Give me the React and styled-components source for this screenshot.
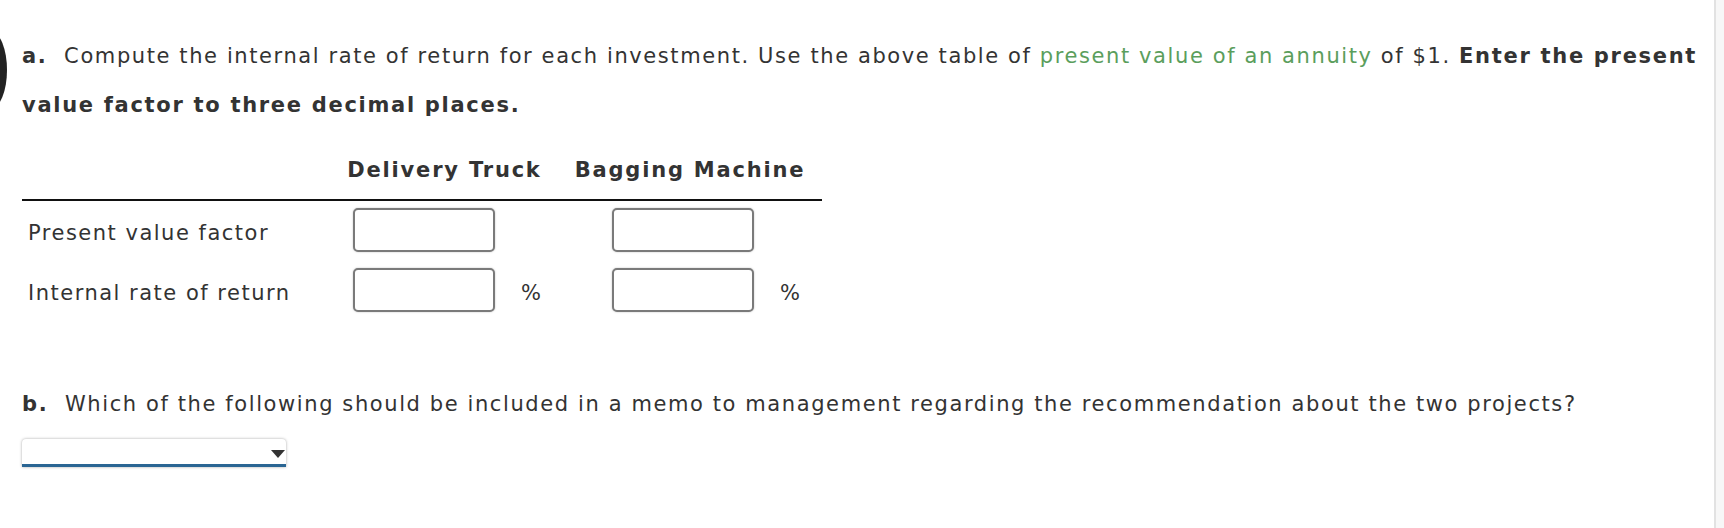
import styled, { createGlobalStyle } from 'styled-components';

const GlobalStyle = createGlobalStyle`
  html, body {
    margin: 0;
    padding: 0;
    background: #f7f7f7;
  }
  body {
    font-family: "DejaVu Sans", Verdana, sans-serif;
    color: #333;
  }
`;

const Page = styled.div`
  position: relative;
  width: 1716px;
  min-height: 528px;
  background: #fff;
  border-right: 2px solid #e2e2e2;
  padding: 32px 0 0 22px;
  box-sizing: border-box;
  overflow: hidden;
`;

const Marker = styled.div`
  position: absolute;
  left: -24px;
  top: 32px;
  width: 31px;
  height: 76px;
  border-radius: 50%;
  background: #222;
`;

const Question = styled.p`
  margin: 0;
  font-size: 21px;
  letter-spacing: 1.6px;
  line-height: 49px;
  width: 1690px;

  & b {
    font-weight: bold;
    letter-spacing: 1.7px;
  }
`;

const Link = styled.span`
  color: #5b9e5c;
`;

const Table = styled.div`
  margin-top: 23px;
  width: 800px;
  display: grid;
  grid-template-columns: 309px 227px 264px;
`;

const HeadCell = styled.div`
  height: 48px;
  border-bottom: 2px solid #111;
  font-size: 21px;
  font-weight: bold;
  letter-spacing: 1.8px;
  line-height: 24px;
  padding-top: 5px;
  box-sizing: border-box;
  text-align: center;
  white-space: nowrap;
`;

const Label = styled.div`
  height: 60px;
  padding: 10px 0 0 6px;
  box-sizing: border-box;
  display: flex;
  align-items: flex-start;
  font-size: 21px;
  letter-spacing: 1.5px;

  & > span {
    display: block;
    line-height: 44px;
  }
`;

const Cell = styled.div`
  height: 60px;
  padding: 7px 0 0 ${(p) => p.$pad}px;
  box-sizing: border-box;
  display: flex;
  align-items: flex-start;
  gap: 26px;
`;

const Box = styled.div`
  width: 142px;
  height: 44px;
  border: 2px solid #7a7a7a;
  border-radius: 5px;
  box-sizing: border-box;
  box-shadow: 0 0 2px rgba(0, 0, 0, 0.25);
  background: #fff;
`;

const Pct = styled.span`
  font-size: 21px;
  line-height: 44px;
  padding-top: 3px;
`;

const PartB = styled(Question)`
  margin-top: 59px;
`;

const Select = styled.div`
  margin-top: 10px;
  width: 264px;
  height: 25px;
  background: #fff;
  border-radius: 4px 4px 0 0;
  box-shadow: 0 0 3px rgba(0, 0, 0, 0.35);
  border-bottom: 3px solid #2a6593;
  display: flex;
  justify-content: flex-end;
  align-items: center;
  box-sizing: content-box;
`;

const Caret = styled.span`
  width: 0;
  height: 0;
  border-left: 7px solid transparent;
  border-right: 7px solid transparent;
  border-top: 8px solid #333;
  margin-right: 1px;
  margin-top: 4px;
`;

const rows = ['Present value factor', 'Internal rate of return'];

export default function App() {
  return (
    <>
      <GlobalStyle />
      <Page>
        <Marker />
        <Question>
          <b>a.</b>&nbsp; Compute the internal rate of return for each investment. Use the above table of{' '}
          <Link>present value of an annuity</Link> of $1. <b>Enter the present value factor to three decimal places.</b>
        </Question>
        <Table>
          <HeadCell />
          <HeadCell>Delivery Truck</HeadCell>
          <HeadCell>Bagging Machine</HeadCell>
          {rows.map((r, i) => [
            <Label key={r + 'l'}><span>{r}</span></Label>,
            <Cell key={r + 'a'} $pad={22}>
              <Box />
              {i === 1 && <Pct>%</Pct>}
            </Cell>,
            <Cell key={r + 'b'} $pad={54}>
              <Box />
              {i === 1 && <Pct>%</Pct>}
            </Cell>,
          ])}
        </Table>
        <PartB>
          <b>b.</b>&nbsp; Which of the following should be included in a memo to management regarding the recommendation about the two projects?
        </PartB>
        <Select>
          <Caret />
        </Select>
      </Page>
    </>
  );
}
